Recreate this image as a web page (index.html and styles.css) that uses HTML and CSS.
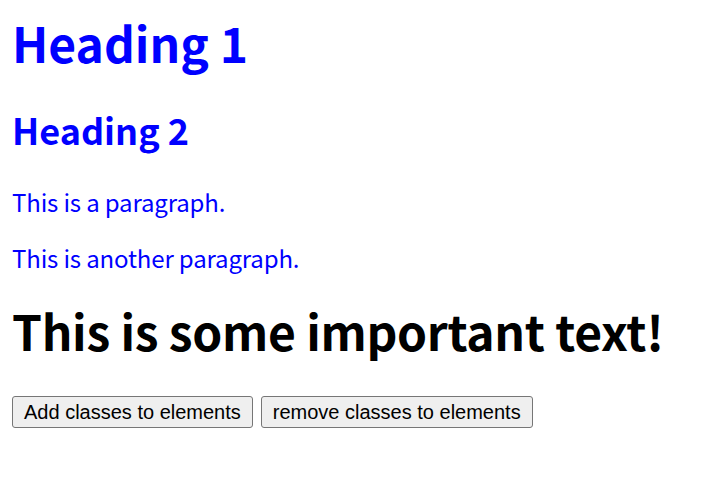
FILE: index.html
```html
<!DOCTYPE html>
<html>
<head>
    <title>classes demo</title>
    <meta name="viewport" content="width=device-width, initial-scale=1">
    <link rel="stylesheet" href="styles.css">
</head>
<body>

<h1 class="blue">Heading 1</h1>
<h2 class="blue">Heading 2</h2>
<p class="blue">This is a paragraph.</p>
<p class="blue">This is another paragraph.</p>

<div class="important">This is some important text!</div>

<div class="buttons">
    <button>Add classes to elements</button>
    <button>remove classes to elements</button>
</div>

</body>
</html>
```

FILE: styles.css
```css
/* page base */
body {
    margin: 11px 12px;
    font-family: "Noto Sans CJK KR", "Noto Sans", sans-serif;
}

h1 {
    font-size: 48px;
    line-height: 1.33;
    margin: 0 0 31px;
}

h2 {
    font-size: 36px;
    line-height: 1.33;
    margin: 30px 0 32px;
}

p {
    font-size: 24px;
    line-height: 1.33;
    letter-spacing: -0.15px;
    margin: 24px 0;
}

.blue {
    color: blue;
}

.important {
    font-size: 48px;
    font-weight: bold;
    line-height: 1.33;
    letter-spacing: -0.3px;
    color: black;
    margin: 25px 0 34px;
}

/* buttons row */
.buttons {
    display: flex;
    gap: 8px;
}

.buttons button {
    font-family: "Liberation Sans", Arial, sans-serif;
    font-size: 20px;
    line-height: 24px;
    padding: 3px 11px;
    color: black;
    background-color: #efefef;
    border: 1px solid #767676;
    border-radius: 3px;
}
```
